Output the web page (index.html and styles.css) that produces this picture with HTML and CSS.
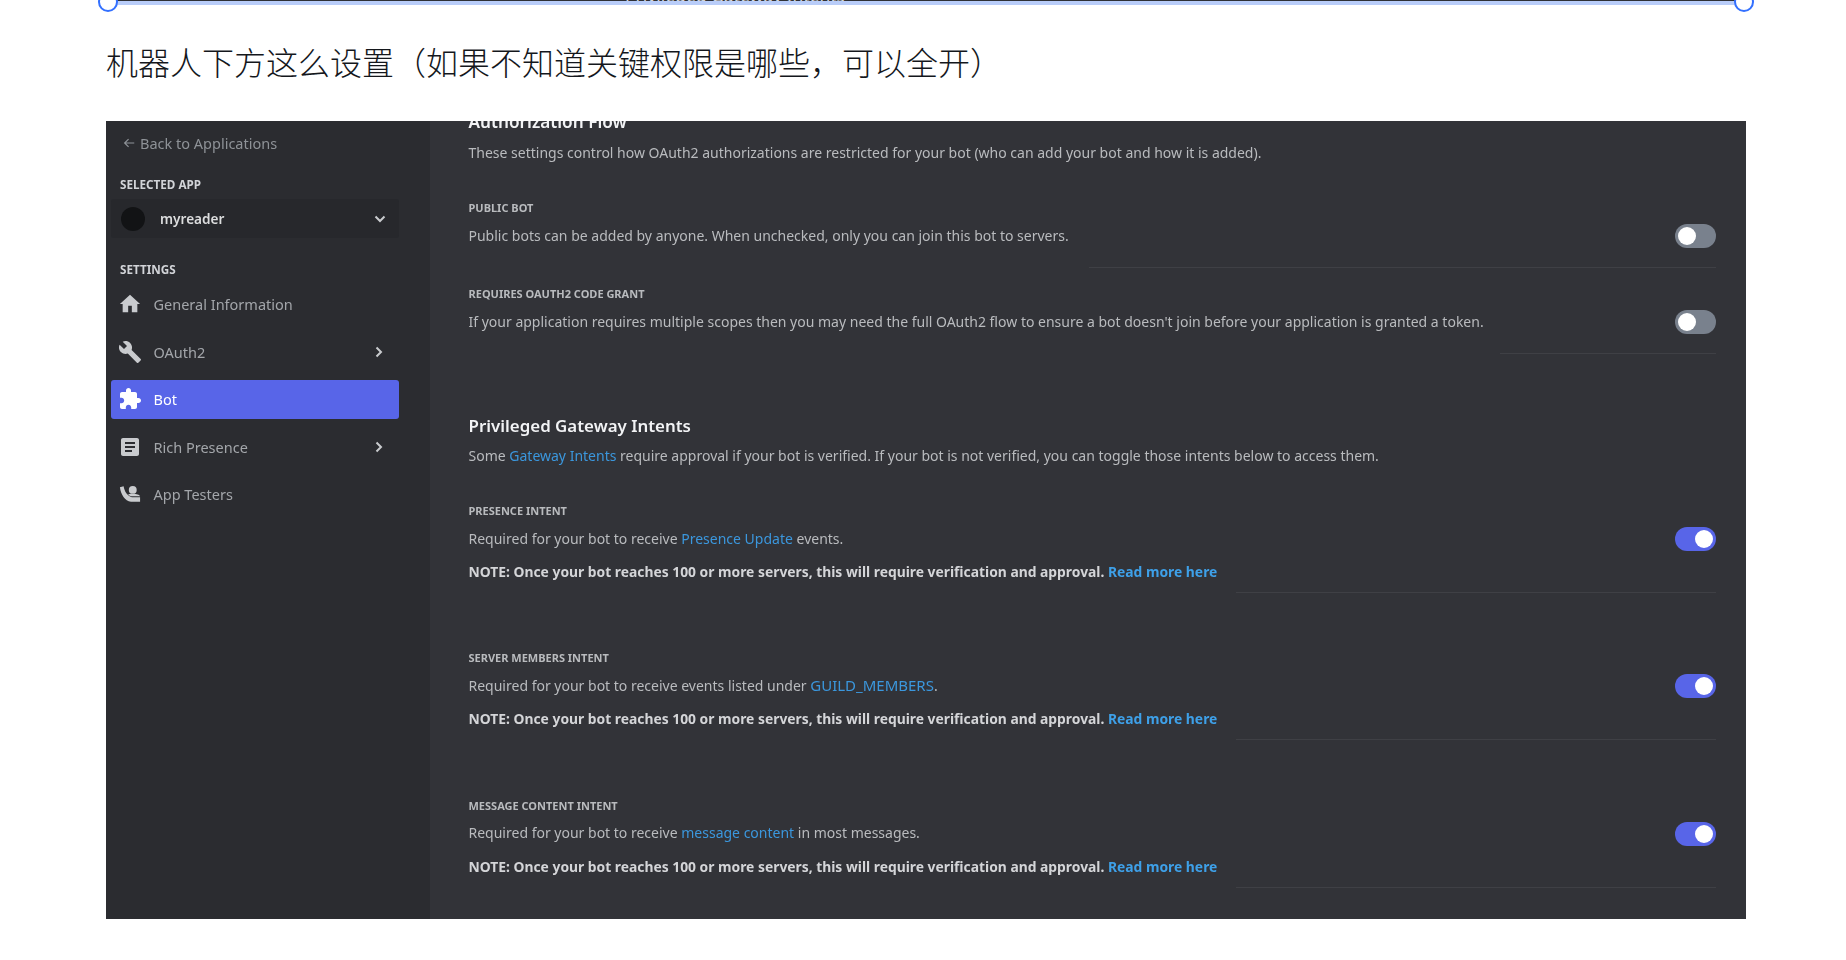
FILE: index.html
```html
<!DOCTYPE html>
<html lang="zh">
<head>
<meta charset="utf-8">
<title>机器人设置</title>
<link rel="stylesheet" href="styles.css">
</head>
<body>
<div class="selbar">
  <div class="prev-line"><span class="prev-text">Privileged Gateway Intents</span></div>
  <div class="sel-fill"></div>
  <span class="handle handle-l"></span>
  <span class="handle handle-r"></span>
</div>
<p class="caption">机器人下方这么设置（如果不知道关键权限是哪些，可以全开）</p>
<div class="shot">
  <aside class="side">
    <div class="back"><svg class="back-arrow" viewBox="0 0 16 16"><path d="M14 8H3M7.5 3.5L3 8l4.5 4.5" fill="none" stroke="currentColor" stroke-width="1.4"/></svg><span>Back to Applications</span></div>
    <div class="side-h h-app">SELECTED APP</div>
    <div class="select">
      <span class="avatar"></span><span class="app-name">myreader</span>
      <svg class="chev-d" viewBox="0 0 14 14"><path d="M2.5 4.5L7 9l4.500-4.500" fill="none" stroke="currentColor" stroke-width="2"/></svg>
    </div>
    <div class="side-h h-set">SETTINGS</div>
    <nav class="nav">
      <div class="item"><svg class="ico" viewBox="0 0 24 24"><path d="M10 21v-7h4v7h6v-9h3L12 2 1 12h3v9z"/></svg><span>General Information</span></div>
      <div class="item"><svg class="ico" viewBox="1 1 22 22"><path d="M22.7 19l-9.1-9.1c.9-2.3.4-5-1.5-6.9-2-2-5-2.4-7.4-1.3L9 6 6 9 1.6 4.7C.4 7.1.9 10.1 2.9 12.1c1.9 1.9 4.6 2.4 6.9 1.5l9.1 9.1c.4.4 1 .4 1.4 0l2.3-2.3c.5-.4.5-1.1.1-1.4z"/></svg><span>OAuth2</span><svg class="chev-r" viewBox="0 0 14 14"><path d="M4.500 2.500L9 7l-4.500 4.500" fill="none" stroke="currentColor" stroke-width="2"/></svg></div>
      <div class="item active"><svg class="ico" viewBox="1 1 22 22"><path d="M20.5 11H19V7c0-1.1-.9-2-2-2h-4V3.5C13 2.12 11.88 1 10.5 1S8 2.12 8 3.5V5H4c-1.1 0-1.99.9-1.99 2v3.8H3.5c1.49 0 2.7 1.21 2.7 2.7s-1.21 2.7-2.7 2.7H2V20c0 1.1.9 2 2 2h3.8v-1.5c0-1.49 1.21-2.7 2.7-2.7 1.49 0 2.7 1.21 2.7 2.7V22H17c1.1 0 2-.9 2-2v-4h1.5c1.38 0 2.5-1.12 2.5-2.5S21.88 11 20.5 11z"/></svg><span>Bot</span></div>
      <div class="item"><svg class="ico" viewBox="1 1 22 22"><path d="M19 3H5c-1.1 0-2 .9-2 2v14c0 1.1.9 2 2 2h14c1.1 0 2-.9 2-2V5c0-1.1-.9-2-2-2zm-5 14H7v-2h7v2zm3-4H7v-2h10v2zm0-4H7V7h10v2z"/></svg><span>Rich Presence</span><svg class="chev-r" viewBox="0 0 14 14"><path d="M4.500 2.500L9 7l-4.500 4.500" fill="none" stroke="currentColor" stroke-width="2"/></svg></div>
      <div class="item"><svg class="ico" viewBox="0 0 24 24"><circle cx="15" cy="7.5" r="4.3"/><path d="M1 4.5L5 3.5C6 9 8.500 13.500 14 15.500H23V20.500H13C6.500 19.500 2 12.500 1 4.500Z"/><path d="M10 12.500C11.500 11.500 13.500 12 15.500 12C19 12 22.500 12.500 23 14.500H14.500C12.500 14.500 11 13.700 10 12.500Z"/></svg><span>App Testers</span></div>
    </nav>
  </aside>
  <main class="main">
    <h2 class="head head-clip">Authorization Flow</h2>
    <p class="lead">These settings control how OAuth2 authorizations are restricted for your bot (who can add your bot and how it is added).</p>

    <section class="row row-first">
      <div class="label">PUBLIC BOT</div>
      <div class="line"><span class="desc">Public bots can be added by anyone. When unchecked, only you can join this bot to servers.</span><span class="toggle"></span></div>
      <div class="rule rule-pub"></div>
    </section>
    <section class="row row-next">
      <div class="label">REQUIRES OAUTH2 CODE GRANT</div>
      <div class="line"><span class="desc">If your application requires multiple scopes then you may need the full OAuth2 flow to ensure a bot doesn't join before your application is granted a token.</span><span class="toggle"></span></div>
      <div class="rule rule-grant"></div>
    </section>

    <h2 class="head head-priv">Privileged Gateway Intents</h2>
    <p class="lead lead-priv">Some <a class="lnk">Gateway Intents</a> require approval if your bot is verified. If your bot is not verified, you can toggle those intents below to access them.</p>

    <section class="row row-first row-after-priv">
      <div class="label">PRESENCE INTENT</div>
      <div class="line"><span class="desc">Required for your bot to receive <a class="lnk">Presence Update</a> events.</span><span class="toggle on"></span></div>
      <p class="note">NOTE: Once your bot reaches 100 or more servers, this will require verification and approval. <a class="lnk">Read more here</a></p>
      <div class="rule rule-note"></div>
    </section>
    <section class="row row-intent">
      <div class="label">SERVER MEMBERS INTENT</div>
      <div class="line"><span class="desc">Required for your bot to receive events listed under <a class="lnk lnk-caps">GUILD_MEMBERS</a>.</span><span class="toggle on"></span></div>
      <p class="note">NOTE: Once your bot reaches 100 or more servers, this will require verification and approval. <a class="lnk">Read more here</a></p>
      <div class="rule rule-note"></div>
    </section>
    <section class="row row-intent">
      <div class="label">MESSAGE CONTENT INTENT</div>
      <div class="line"><span class="desc">Required for your bot to receive <a class="lnk">message content</a> in most messages.</span><span class="toggle on"></span></div>
      <p class="note">NOTE: Once your bot reaches 100 or more servers, this will require verification and approval. <a class="lnk">Read more here</a></p>
      <div class="rule rule-note"></div>
    </section>
  </main>
</div>
</body>
</html>
```
FILE: styles.css
```css
* { box-sizing: border-box; }
html, body { margin: 0; padding: 0; background: #fff; }
body { width: 1846px; height: 960px; overflow: hidden; position: relative; font-family: "Noto Sans", sans-serif; }

.selbar { margin: 0 102px 0 108px; height: 5px; position: relative; }
.prev-line { height: 1px; background: #2f3136; position: relative; overflow: hidden; }
.prev-text { position: absolute; left: 517px; bottom: -3px; font-size: 17.500px; line-height: 1; color: #d8d9dc; white-space: nowrap; }
.sel-fill { height: 4px; background: #b9cdf9; }
.handle { position: absolute; top: -8px; width: 20px; height: 20px; border: 2px solid #3370ff; border-radius: 50%; background: #fff; }
.handle-l { left: -10px; }
.handle-r { right: -10px; }

.caption { margin: 34px 0 0 106px; height: 82px; font-family: "Noto Sans CJK SC", sans-serif; font-size: 32px; font-weight: 300; line-height: 44px; color: #14171c; white-space: nowrap; }

.shot { display: flex; margin-left: 106px; width: 1640px; height: 798px; overflow: hidden; filter: blur(0.5px); }

.side { width: 324px; flex: none; background: #2b2c30; color: #b5bac1; padding: 0 31.500px 0 5px; }
.back { display: flex; align-items: center; gap: 4px; height: 20px; margin: 12px 0 0 11px; font-size: 14.500px; color: #8e9297; }
.back-arrow { width: 14px; height: 14px; }
.side-h { font-size: 11.700px; font-weight: 700; line-height: 14px; color: #d2d4d8; margin-left: 9px; }
.h-app { margin-top: 24px; }
.h-set { margin-top: 24px; }
.select { display: flex; align-items: center; height: 39px; margin-top: 8px; padding-left: 10px; background: #27282c; border-radius: 3px; }
.avatar { width: 24px; height: 24px; border-radius: 50%; background: #121315; flex: none; }
.app-name { margin-left: 15px; flex: 1; font-size: 13.600px; font-weight: 600; color: #dcddde; }
.chev-d { width: 14px; height: 14px; margin-right: 11.500px; color: #c9cbce; }

.nav { display: flex; flex-direction: column; gap: 8.500px; margin-top: 8.500px; }
.item { display: flex; align-items: center; height: 39px; padding-left: 9px; border-radius: 3px; font-size: 14.500px; color: #a3a6aa; }
.item span { flex: 1; margin-left: 14.500px; }
.ico { width: 24px; height: 24px; flex: none; padding: 1px; margin-left: -2px; fill: #c9cbce; margin-right: -3px; }
.chev-r { width: 14px; height: 14px; margin-right: 12.500px; color: #c9cbce; }
.item.active { background: #5865e8; color: #fff; }
.item.active .ico { fill: #fff; }

.main { flex: 1; background: #323338; padding: 0 30px 0 38.500px; color: #b9bbbe; }
.head { margin: 0; font-size: 17.200px; font-weight: 600; line-height: 24px; color: #f2f3f5; }
.head-clip { margin-top: -11px; }
.head-priv { margin-top: 60px; font-size: 16.900px; }
.lead { margin: 9px 0 0; font-size: 14px; line-height: 20px; white-space: nowrap; }
.lead-priv { margin-top: 7.500px; }
.row-first { margin-top: 38px; }
.row-after-priv { margin-top: 38.500px; }
.row-next { margin-top: 19px; }
.row-intent { margin-top: 58.400px; }
.label { font-size: 11px; font-weight: 700; line-height: 14px; color: #b9bbbe; white-space: nowrap; }
.line { display: flex; align-items: center; justify-content: space-between; height: 24px; margin-top: 9px; font-size: 14px; white-space: nowrap; }
.desc { padding-bottom: 2px; }
.note { margin: 11px 0 0; font-size: 13.850px; font-weight: 700; line-height: 20px; color: #d4d5d8; white-space: nowrap; }
.note .lnk { color: #3ea0e8; }
.lnk { color: #3b97dd; }
.lnk-caps { font-size: 15px; }

.rule { height: 1px; background: #3f4045; margin-top: 19px; }
.rule-pub { margin-left: 620px; }
.rule-grant { margin-left: 1031px; }
.rule-note { margin-left: 767px; margin-top: 10px; }

.toggle { position: relative; width: 41px; height: 24px; flex: none; border-radius: 12px; background: #79818d; }
.toggle::after { content: ""; position: absolute; top: 3px; left: 3px; width: 18px; height: 18px; border-radius: 50%; background: #fff; }
.toggle.on { background: #5865e8; }
.toggle.on::after { left: 20px; }
```
